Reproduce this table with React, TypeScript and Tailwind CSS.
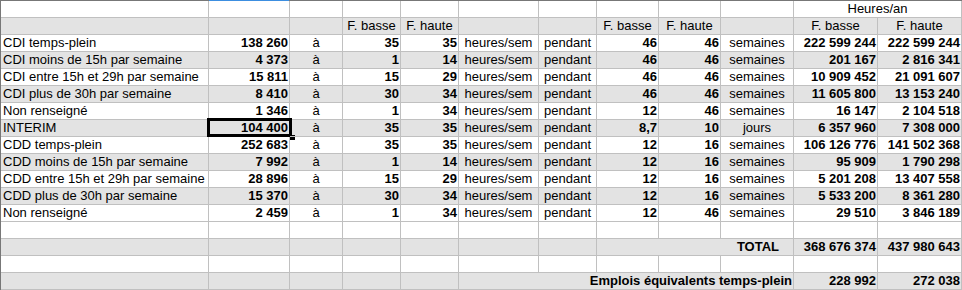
import React from "react";

// Spreadsheet: heures travaillées par type de contrat
const rows = [
  ["CDI temps-plein", "138 260", "35", "35", "46", "46", "semaines", "222 599 244", "222 599 244"],
  ["CDI moins de 15h par semaine", "4 373", "1", "14", "46", "46", "semaines", "201 167", "2 816 341"],
  ["CDI entre 15h et 29h par semaine", "15 811", "15", "29", "46", "46", "semaines", "10 909 452", "21 091 607"],
  ["CDI plus de 30h par semaine", "8 410", "30", "34", "46", "46", "semaines", "11 605 800", "13 153 240"],
  ["Non renseigné", "1 346", "1", "34", "12", "46", "semaines", "16 147", "2 104 518"],
  ["INTERIM", "104 400", "35", "35", "8,7", "10", "jours", "6 357 960", "7 308 000"],
  ["CDD temps-plein", "252 683", "35", "35", "12", "16", "semaines", "106 126 776", "141 502 368"],
  ["CDD moins de 15h par semaine", "7 992", "1", "14", "12", "16", "semaines", "95 909", "1 790 298"],
  ["CDD entre 15h et 29h par semaine", "28 896", "15", "29", "12", "16", "semaines", "5 201 208", "13 407 558"],
  ["CDD plus de 30h par semaine", "15 370", "30", "34", "12", "16", "semaines", "5 533 200", "8 361 280"],
  ["Non renseigné", "2 459", "1", "34", "12", "46", "semaines", "29 510", "3 846 189"],
];

const Row = ({ gray, children }: { gray?: boolean; children?: React.ReactNode }) => (
  <div
    className={`grid grid-cols-[208px_81px_53px_58px_58px_80px_58px_62px_62px_73px_84px_84px] h-[17px] ${
      gray ? "bg-[#e3e3e3]" : "bg-white"
    }`}
  >
    {children}
  </div>
);

const Cell = ({ className = "", children }: { className?: string; children?: React.ReactNode }) => (
  <div className={`relative border-r border-b border-[#c0c0c0] h-[17px] whitespace-nowrap ${className}`}>
    {children}
  </div>
);

const Num = ({ children, className = "" }: { children?: React.ReactNode; className?: string }) => (
  <Cell className={`text-right pr-[1px] font-bold ${className}`}>{children}</Cell>
);

const Empty = ({ span = "" }: { span?: string }) => <Cell className={span} />;

export default function App() {
  return (
    <div
      className="w-[962px] h-[290px] bg-white border-l border-[#777777] text-[13px] leading-[16px] text-black overflow-hidden"
      style={{ fontFamily: '"Liberation Sans", Arial, sans-serif' }}
    >
      <div className="flex h-px">
        <div className="w-[208px] bg-[#777777]" />
        <div className="w-[80px] bg-[#3c8ee0]" />
        <div className="flex-1 bg-[#777777]" />
      </div>

      {/* header rows */}
      <Row>
        {Array.from({ length: 10 }).map((_, i) => (
          <Empty key={i} />
        ))}
        <Cell className="col-span-2 text-center">Heures/an</Cell>
      </Row>
      <Row gray>
        <Empty />
        <Empty />
        <Empty />
        <Cell className="text-center">F. basse</Cell>
        <Cell className="text-center">F. haute</Cell>
        <Empty />
        <Empty />
        <Cell className="text-center">F. basse</Cell>
        <Cell className="text-center">F. haute</Cell>
        <Empty />
        <Cell className="text-center">F. basse</Cell>
        <Cell className="text-center">F. haute</Cell>
      </Row>

      {rows.map((r, i) => (
        <Row key={i} gray={i % 2 === 1}>
          <Cell className="pl-[2px]">{r[0]}</Cell>
          <Num>
            {r[1]}
            {r[0] === "INTERIM" && (
              <>
                <div className="absolute left-[-2px] top-[-2px] w-[85px] h-[19px] border-[3px] border-black" />
                <div className="absolute left-[81px] top-[15px] w-[5px] h-[5px] bg-black" />
              </>
            )}
          </Num>
          <Cell className="text-center">à</Cell>
          <Num>{r[2]}</Num>
          <Num>{r[3]}</Num>
          <Cell className="text-center">heures/sem</Cell>
          <Cell className="text-center">pendant</Cell>
          <Num>{r[4]}</Num>
          <Num>{r[5]}</Num>
          <Cell className="text-center">{r[6]}</Cell>
          <Num>{r[7]}</Num>
          <Num>{r[8]}</Num>
        </Row>
      ))}

      <Row>
        {Array.from({ length: 12 }).map((_, i) => (
          <Empty key={i} />
        ))}
      </Row>
      <Row gray>
        {Array.from({ length: 7 }).map((_, i) => (
          <Empty key={i} />
        ))}
        <Cell className="col-span-3 text-right pr-[14px] font-bold">TOTAL</Cell>
        <Num>368 676 374</Num>
        <Num>437 980 643</Num>
      </Row>
      <Row>
        {Array.from({ length: 12 }).map((_, i) => (
          <Empty key={i} />
        ))}
      </Row>
      <Row gray>
        {Array.from({ length: 5 }).map((_, i) => (
          <Empty key={i} />
        ))}
        <Cell className="col-span-5 text-right pr-[1px] font-bold">Emplois équivalents temps-plein</Cell>
        <Num>228 992</Num>
        <Num>272 038</Num>
      </Row>
    </div>
  );
}
